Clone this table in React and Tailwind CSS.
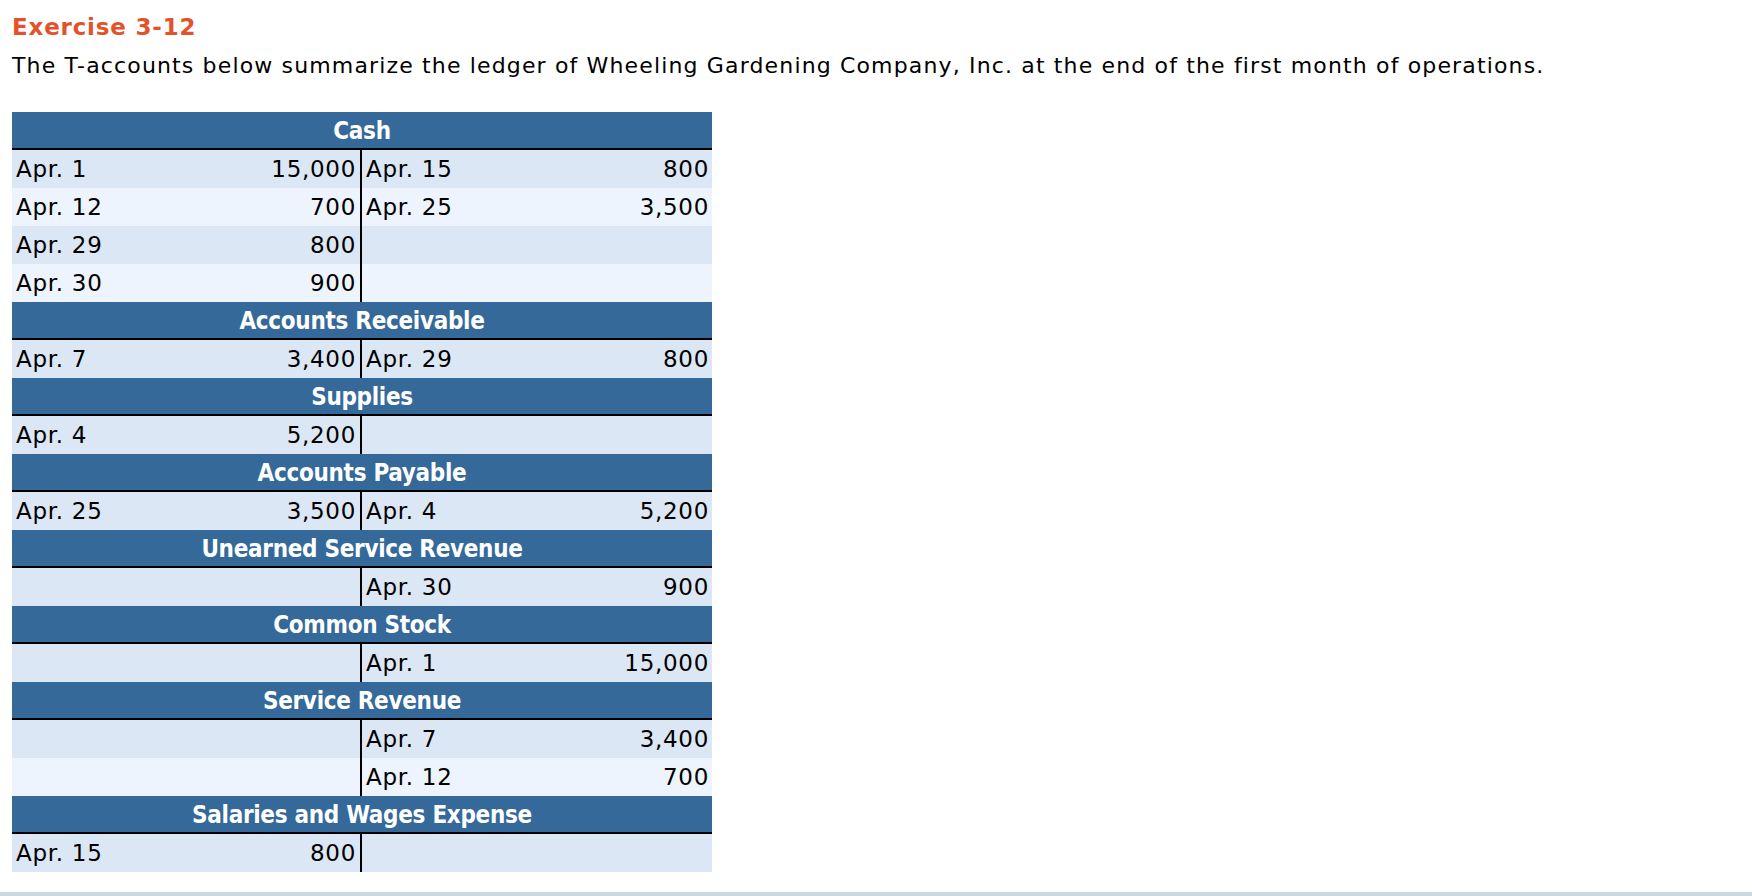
import React from "react";

const accounts = [
  {
    name: "Cash",
    rows: [
      ["Apr. 1", "15,000", "Apr. 15", "800"],
      ["Apr. 12", "700", "Apr. 25", "3,500"],
      ["Apr. 29", "800", "", ""],
      ["Apr. 30", "900", "", ""],
    ],
  },
  { name: "Accounts Receivable", rows: [["Apr. 7", "3,400", "Apr. 29", "800"]] },
  { name: "Supplies", rows: [["Apr. 4", "5,200", "", ""]] },
  { name: "Accounts Payable", rows: [["Apr. 25", "3,500", "Apr. 4", "5,200"]] },
  { name: "Unearned Service Revenue", rows: [["", "", "Apr. 30", "900"]] },
  { name: "Common Stock", rows: [["", "", "Apr. 1", "15,000"]] },
  {
    name: "Service Revenue",
    rows: [
      ["", "", "Apr. 7", "3,400"],
      ["", "", "Apr. 12", "700"],
    ],
  },
  { name: "Salaries and Wages Expense", rows: [["Apr. 15", "800", "", ""]] },
];

function TAccount({ account }) {
  return (
    <div>
      <div className="h-[38px] bg-[#35699a] border-b-2 border-black text-center text-white font-bold text-[24px] leading-[36px] pt-[1px] font-['DejaVu_Sans_Condensed','DejaVu_Sans',sans-serif] [font-stretch:condensed] tracking-[-0.3px]">
        {account.name}
      </div>
      {account.rows.map((row, i) => (
        <div
          key={i}
          className={`flex h-[38px] text-[23px] leading-[38px] tracking-[0.7px] text-black ${
            i % 2 === 0 ? "bg-[#dce7f5]" : "bg-[#edf4fd]"
          }`}
        >
          <div className="w-[348px] flex justify-between pl-[4px] pr-[4px]">
            <span>{row[0]}</span>
            <span>{row[1]}</span>
          </div>
          <div className="w-[352px] border-l-2 border-black flex justify-between pl-[4px] pr-[3px]">
            <span>{row[2]}</span>
            <span>{row[3]}</span>
          </div>
        </div>
      ))}
    </div>
  );
}

export default function App() {
  return (
    <div className="h-[896px] flex flex-col bg-white font-['DejaVu_Sans','Verdana',sans-serif]">
      <div className="px-[12px] pt-[13px]">
        <h1 className="text-[23px] leading-[28px] font-bold tracking-[0.8px] text-[#e3532b]">
          Exercise 3-12
        </h1>
        <p className="mt-[11px] text-[22px] leading-[28px] tracking-[1.15px] text-black">
          The T-accounts below summarize the ledger of Wheeling Gardening
          Company, Inc. at the end of the first month of operations.
        </p>
        <div className="mt-[32px] w-[700px]">
          {accounts.map((a) => (
            <TAccount key={a.name} account={a} />
          ))}
        </div>
      </div>
      <div className="mt-auto h-[4px] bg-[#cdd7e1]" />
    </div>
  );
}
